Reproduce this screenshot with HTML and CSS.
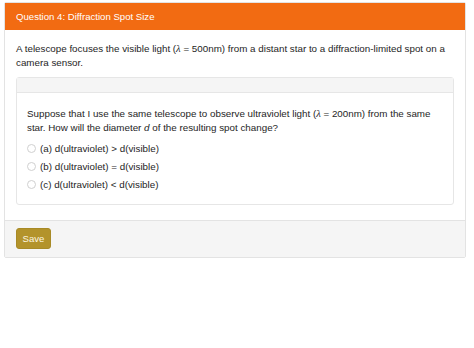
FILE: index.html
```html
<!DOCTYPE html>
<html>
  <head>
    <meta charset="utf-8">
    <link rel="stylesheet" href="styles.css">
  </head>
  <body>
    <div class="card">
      <div class="card-header">Question 4: Diffraction Spot Size</div>
      <div class="card-body">
        <p class="lead-text">A telescope focuses the visible light (<span class="lambda">&lambda;</span> = 500nm) from a distant star to a diffraction-limited spot on a camera sensor.</p>
        <div class="inner-card">
          <div class="inner-header"></div>
          <div class="inner-body">
            <p class="question">Suppose that I use the same telescope to observe ultraviolet light (<span class="lambda">&lambda;</span> = 200nm) from the same star. How will the diameter <i>d</i> of the resulting spot change?</p>
            <label class="option"><span class="radio"></span>(a) d(ultraviolet) &gt; d(visible)</label>
            <label class="option"><span class="radio"></span>(b) d(ultraviolet) = d(visible)</label>
            <label class="option"><span class="radio"></span>(c) d(ultraviolet) &lt; d(visible)</label>
          </div>
        </div>
      </div>
      <div class="card-footer">
        <button class="btn-save">Save</button>
      </div>
    </div>
  </body>
</html>
```

FILE: styles.css
```css
html, body {
  background-color: #fff;
  margin: 0;
  padding: 0;
}
body {
  padding: 2px 8px 0 4px;
  font-family: "Liberation Sans", Arial, sans-serif;
  font-size: 9.8px;
  color: #1e1e1e;
}
.card {
  border: 1px solid #e3e3e3;
  border-radius: 2px;
}
.card-header {
  background-color: #f26b12;
  color: #fff;
  height: 27px;
  line-height: 27px;
  padding: 0 11px;
  font-size: 9.6px;
}
.card-body {
  padding: 12px 11px 15px 11px;
}
.lead-text {
  margin: 0 0 7px 0;
  line-height: 14px;
}
.lambda {
  font-family: "Liberation Serif", serif;
  font-style: italic;
  font-size: 10.5px;
}
.inner-card {
  border: 1px solid #e6e6e6;
  border-radius: 3px;
}
.inner-header {
  height: 14px;
  background-color: #f5f5f5;
  border-bottom: 1px solid #e6e6e6;
}
.inner-body {
  padding: 14px 10px 11px 10px;
}
.question {
  margin: 0 0 4px 0;
  line-height: 14px;
}
.option {
  display: flex;
  align-items: center;
  height: 18px;
}
.radio {
  width: 7px;
  height: 7px;
  border: 1px solid #d0d0d0;
  border-radius: 50%;
  margin-right: 4px;
  background: #fff;
}
.card-footer {
  background-color: #f5f5f5;
  border-top: 1px solid #e3e3e3;
  padding: 7px 11px 8px 11px;
}
.btn-save {
  display: block;
  background-color: #b3932b;
  border: 1px solid #a88a26;
  border-radius: 3px;
  color: #fdf6e0;
  font-family: "Liberation Sans", Arial, sans-serif;
  font-size: 9.6px;
  width: 35px;
  height: 21px;
  padding: 0;
}
```
